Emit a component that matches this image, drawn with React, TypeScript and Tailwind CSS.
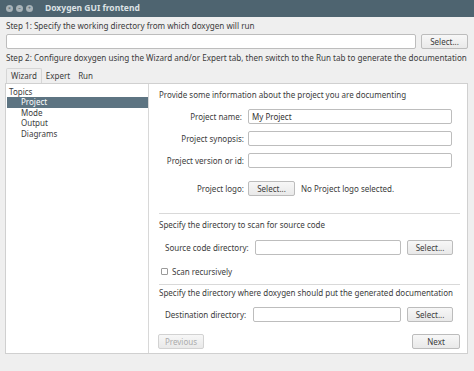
import React from "react";

const F = { fontFamily: '"Noto Sans", "Open Sans", sans-serif' };

function Btn({ children, className = "", disabled = false }: { children: React.ReactNode; className?: string; disabled?: boolean }) {
  return (
    <div
      className={`flex items-center justify-center h-[15px] rounded-[2px] border bg-gradient-to-b from-[#f7f7f7] to-[#e9e9e9] text-[8px] ${disabled ? "text-[#ababab] border-[#d2d2d2]" : "text-[#3c3c3c] border-[#bcbcbc]"} ${className}`}
    >
      {children}
    </div>
  );
}

function Input({ className = "", value = "" }: { className?: string; value?: string }) {
  return (
    <div className={`h-[15px] rounded-[2px] border border-[#bdbdbd] bg-white flex items-center px-[3px] text-[8px] text-[#333] ${className}`}>
      {value}
    </div>
  );
}

function Circle({ children }: { children: React.ReactNode }) {
  return (
    <div className="w-[7px] h-[7px] rounded-full bg-[#a9b3b8] flex items-center justify-center text-[5px] leading-none text-[#4e6470] font-bold">
      {children}
    </div>
  );
}

export default function App() {
  return (
    <div style={F} className="w-[474px] h-[371px] bg-[#efefef] flex flex-col text-[#3c3c3c] overflow-hidden">
      {/* title bar */}
      <div className="h-[17px] bg-[#4e6470] flex items-center pl-[6px] shrink-0">
        <div className="flex gap-[3px]">
          <Circle>×</Circle>
          <Circle>–</Circle>
          <Circle>+</Circle>
        </div>
        <div className="ml-[12px] text-[8.5px] font-bold text-[#dde2e5]">Doxygen GUI frontend</div>
      </div>

      <div className="pl-[6px] pr-[6px] flex flex-col flex-1">
        <div className="h-[16px] mt-[1px] flex items-center text-[8.1px]">Step 1: Specify the working directory from which doxygen will run</div>
        <div className="flex items-center gap-[5px]">
          <Input className="flex-1" />
          <Btn className="w-[47px]">Select...</Btn>
        </div>
        <div className="h-[18px] flex items-center text-[8.1px]">Step 2: Configure doxygen using the Wizard and/or Expert tab, then switch to the Run tab to generate the documentation</div>
        {/* tabs */}
        <div className="flex items-end h-[16px] text-[8px]">
          <div className="h-[15px] px-[4px] flex items-center border border-b-0 border-[#d6d6d6] rounded-t-[2px]">Wizard</div>
          <div className="h-[15px] px-[4px] flex items-center">Expert</div>
          <div className="h-[15px] px-[4px] flex items-center">Run</div>
        </div>
        {/* frame */}
        <div className="h-[271px] w-[463px] -ml-[1px] border border-[#d0d0d0] flex bg-white">
          <div className="w-[143px] border-r border-[#d8d8d8] flex flex-col text-[8px] pt-[2px]">
            <div className="h-[11px] flex items-center pl-[3px]">Topics</div>
            <div className="h-[10.5px] flex items-center pl-[14px] bg-[#5d7482] text-white ml-[1px]">Project</div>
            <div className="h-[10.5px] flex items-center pl-[15px]">Mode</div>
            <div className="h-[10.5px] flex items-center pl-[15px]">Output</div>
            <div className="h-[10.5px] flex items-center pl-[15px]">Diagrams</div>
          </div>
          <div className="flex-1 flex flex-col text-[8px] pl-[10px] pr-[7px]">
            <div className="h-[22px] flex items-center">Provide some information about the project you are documenting</div>
            <div className="flex flex-col gap-[7px] mt-[3px]">
              <div className="flex items-center">
                <div className="w-[89px] text-right pr-[6px]">Project name:</div>
                <Input className="w-[204px]" value="My Project" />
              </div>
              <div className="flex items-center">
                <div className="w-[89px] text-right pr-[4px]">Project synopsis:</div>
                <Input className="w-[204px]" />
              </div>
              <div className="flex items-center">
                <div className="w-[89px] text-right pr-[4px]">Project version or id:</div>
                <Input className="w-[204px]" />
              </div>
            </div>
            <div className="flex items-center mt-[13px]">
              <div className="w-[89px] text-right pr-[4px]">Project logo:</div>
              <Btn className="w-[47px]">Select...</Btn>
              <div className="ml-[6px]">No Project logo selected.</div>
            </div>
            <div className="mt-[17px] h-px bg-[#d9d9d9]" />
            <div className="h-[21px] flex items-center">Specify the directory to scan for source code</div>
            <div className="flex items-center mt-[5px]">
              <div className="pl-[6px] w-[96px]">Source code directory:</div>
              <Input className="w-[146px]" />
              <Btn className="w-[46px] ml-[6px]">Select...</Btn>
            </div>
            <div className="flex items-center h-[15px] mt-[9px] pl-[2px]">
              <div className="w-[7px] h-[7px] border border-[#9a9a9a] bg-white rounded-[1px]" />
              <div className="ml-[4px]">Scan recursively</div>
            </div>
            <div className="mt-[5px] h-px bg-[#d9d9d9]" />
            <div className="h-[16px] flex items-center">Specify the directory where doxygen should put the generated documentation</div>
            <div className="flex items-center mt-[6px]">
              <div className="pl-[6px] w-[94px]">Destination directory:</div>
              <Input className="w-[148px]" />
              <Btn className="w-[46px] ml-[6px]">Select...</Btn>
            </div>
            <div className="mt-auto mb-[4px] flex items-center justify-between -ml-[1px]">
              <Btn className="w-[46px]" disabled>Previous</Btn>
              <Btn className="w-[48px]">Next</Btn>
            </div>
          </div>
        </div>
      </div>
    </div>
  );
}
